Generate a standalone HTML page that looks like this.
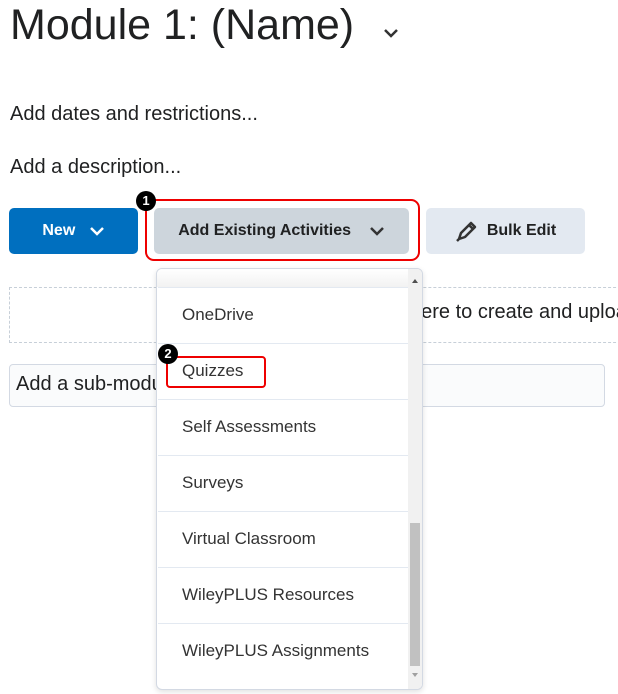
<!DOCTYPE html>
<html><head><style>
body{margin:0;width:618px;height:694px;background:#fff;font-family:"Liberation Sans",sans-serif;color:#202122;position:relative;overflow:hidden}
.a{position:absolute;white-space:nowrap}
.t{font-size:43px;left:10px;top:0px;line-height:50px;color:#202122}
.s{font-size:20px;color:#202122}
.btn{position:absolute;top:208px;height:46px;border-radius:5px;font-size:16px;font-weight:bold;display:flex;align-items:center;justify-content:center;white-space:nowrap}
.item{position:absolute;left:1px;width:250px;height:56px;border-top:1px solid #e3e9f1;font-size:17px;color:#333;box-sizing:border-box;padding-left:24px;line-height:54px;white-space:nowrap}
.badge{position:absolute;width:20px;height:20px;border-radius:50%;background:#000;color:#fff;font-size:13px;font-weight:bold;text-align:center;line-height:20px}
</style></head><body>
<div class="a t">Module 1: (Name)</div>
<svg class="a" style="left:382px;top:27px" width="18" height="12"><path d="M3 3 L9 9 L15 3" stroke="#333" stroke-width="2.5" fill="none"/></svg>
<div class="a s" style="left:10px;top:103px">Add dates and restrictions...</div>
<div class="a s" style="left:10px;top:156px">Add a description...</div>

<div class="a" style="left:9px;top:287px;width:640px;height:54px;border:1px dashed #c7cfd8"></div>
<div class="a s" style="left:410px;top:301px">here to create and upload</div>
<div class="a" style="left:9px;top:364px;width:594px;height:41px;border:1px solid #d3d9e3;border-radius:4px;background:#fafbfc"></div>
<div class="a s" style="left:16px;top:373px">Add a sub-module</div>

<div class="btn" style="left:9px;width:129px;background:#006fbf;color:#fff">New&nbsp;&nbsp;&nbsp;<svg width="16" height="10"><path d="M2 2 L8 8 L14 2" stroke="#fff" stroke-width="2.5" fill="none"/></svg></div>
<div class="btn" style="left:154px;width:255px;background:#cdd5dc;color:#202122;font-weight:600">Add Existing Activities&nbsp;&nbsp;&nbsp;&nbsp;<svg width="16" height="10"><path d="M2 2 L8 8 L14 2" stroke="#333" stroke-width="2.5" fill="none"/></svg></div>
<div class="a" style="left:145px;top:199px;width:271px;height:58px;border:2px solid #e00;border-radius:9px"></div>
<div class="badge" style="left:136px;top:191px">1</div>
<div class="btn" style="left:426px;width:159px;background:#e3e9f1;color:#202122;font-weight:600"><svg width="24" height="22" style="margin-right:8px"><path d="M4 19 L6 13 L16 3 L20 7 L10 17 Z M4 19 L10 17 M14 5 L18 9 M2 21 L6 17" stroke="#333" stroke-width="2.5" fill="none" stroke-linejoin="round"/></svg>Bulk Edit</div>

<div class="a" style="left:156px;top:268px;width:265px;height:420px;background:#fff;border:1px solid #d3d9e3;border-radius:6px;box-shadow:0 2px 6px rgba(0,0,0,.12);overflow:hidden">
<div class="a" style="left:0;top:0;width:252px;height:18px;background:linear-gradient(#fff,#f2f2f2)"></div>
<div class="item" style="top:18px">OneDrive</div>
<div class="item" style="top:74px">Quizzes</div>
<div class="item" style="top:130px">Self Assessments</div>
<div class="item" style="top:186px">Surveys</div>
<div class="item" style="top:242px">Virtual Classroom</div>
<div class="item" style="top:298px">WileyPLUS Resources</div>
<div class="item" style="top:354px">WileyPLUS Assignments</div>
<div class="a" style="left:251px;top:0;width:14px;height:420px;background:#f1f1f1"></div>
<div class="a" style="left:253px;top:254px;width:10px;height:143px;background:#c1c1c1"></div>
<div class="a" style="left:255px;top:10px;width:0;height:0;border-left:3px solid transparent;border-right:3px solid transparent;border-bottom:4px solid #505050"></div>
<div class="a" style="left:255px;top:404px;width:0;height:0;border-left:3px solid transparent;border-right:3px solid transparent;border-top:4px solid #a0a0a0"></div>
</div>
<div class="a" style="left:166px;top:356px;width:96px;height:28px;border:2px solid #e00;border-radius:4px"></div>
<div class="badge" style="left:158px;top:344px">2</div>
</body></html>
